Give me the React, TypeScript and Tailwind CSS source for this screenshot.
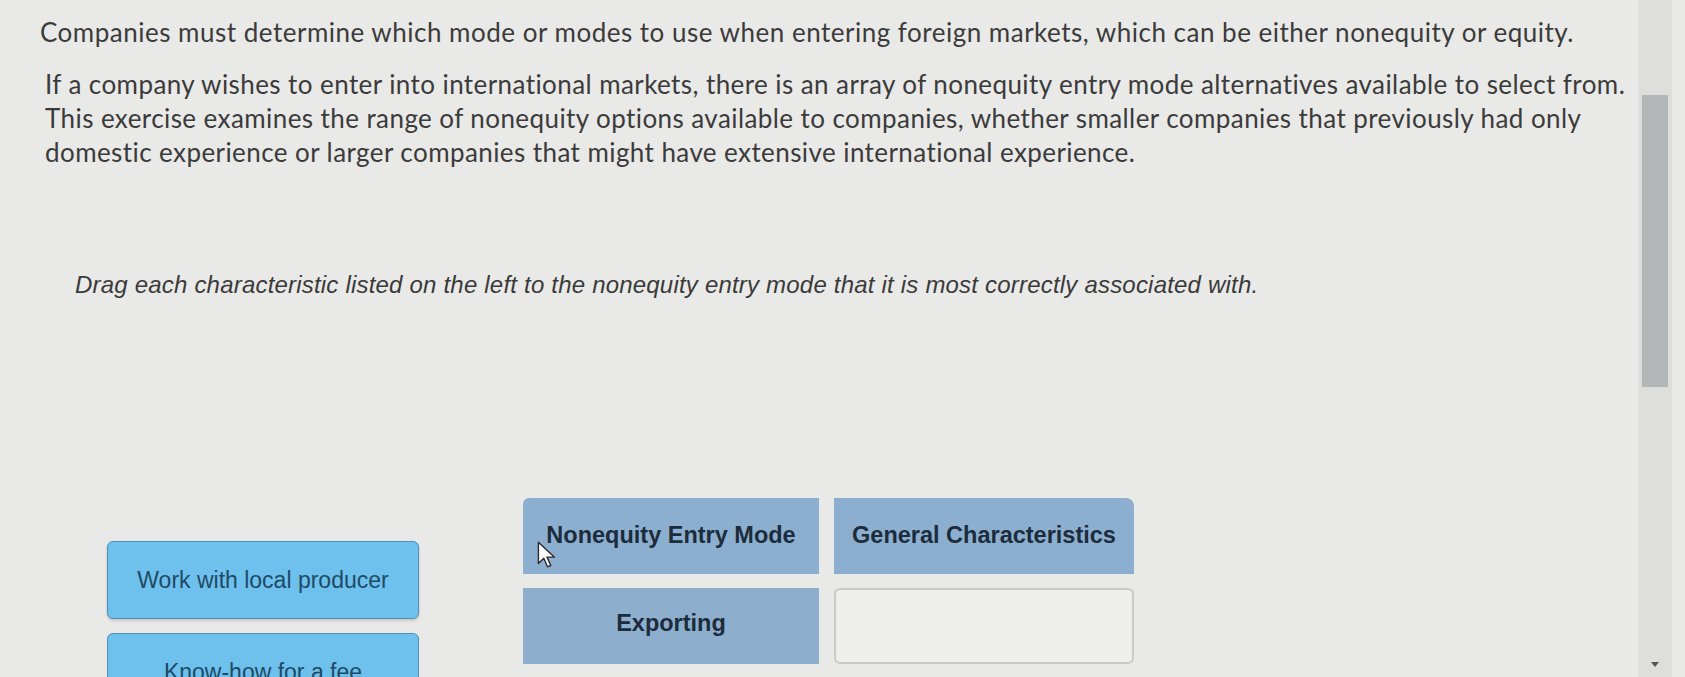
import React from "react";

const bodyFont = { fontFamily: "Lato, 'Open Sans', sans-serif" };

function Cursor() {
  return (
    <svg
      className="absolute left-[13px] top-[42px]"
      width="22"
      height="30"
      viewBox="0 0 20 28"
    >
      <path
        d="M2 2 L2 22 L7 17 L10.5 25 L13.5 23.8 L10 16 L17 16 Z"
        fill="#ffffff"
        stroke="#2a2a2a"
        strokeWidth="1.3"
        strokeLinejoin="round"
      />
    </svg>
  );
}

export default function App() {
  return (
    <div className="flex w-[1685px] h-[677px] overflow-hidden bg-[#e9e9e7] text-[#3b3b3b]">
      <main className="flex-1 pl-[40px] pt-[15px]">
        <p
          className="whitespace-nowrap text-[26px] leading-[34px] tracking-[0.5px]"
          style={bodyFont}
        >
          Companies must determine which mode or modes to use when entering
          foreign markets, which can be either nonequity or equity.
        </p>
        <p
          className="mt-[18px] whitespace-nowrap pl-[5px] text-[26px] leading-[34px] tracking-[0.42px]"
          style={bodyFont}
        >
          If a company wishes to enter into international markets, there is an
          array of nonequity entry mode alternatives available to select from.
          <br />
          This exercise examines the range of nonequity options available to
          companies, whether smaller companies that previously had only
          <br />
          domestic experience or larger companies that might have extensive
          international experience.
        </p>

        <p className="mt-[101px] whitespace-nowrap pl-[35px] text-[24px] leading-[30px] tracking-[0.2px] italic font-['Liberation_Sans',Arial,sans-serif] text-[#3a3a3a]">
          Drag each characteristic listed on the left to the nonequity entry
          mode that it is most correctly associated with.
        </p>

        <div className="mt-[198px] flex items-start font-['Liberation_Sans',Arial,sans-serif]">
          {/* draggable characteristics */}
          <div className="ml-[67px] mt-[43px] flex w-[312px] flex-col gap-[14px]">
            <div className="flex h-[78px] items-center justify-center rounded-[6px] border border-[#4f8fb5] bg-[#6dc1ec] text-[23px] text-[#1f4a66] shadow-[0_2px_3px_rgba(0,0,0,0.15)]">
              Work with local producer
            </div>
            <div className="flex h-[78px] items-center justify-center rounded-[6px] border border-[#4f8fb5] bg-[#6dc1ec] text-[23px] text-[#1f4a66]">
              Know-how for a fee
            </div>
          </div>

          {/* matching table */}
          <div className="ml-[104px] grid grid-cols-[296px_300px] gap-x-[15px] gap-y-[14px] text-[23.5px] font-bold text-[#1c2c3c]">
            <div className="relative flex h-[76px] items-center justify-center rounded-tl-[6px] bg-[#8cafcf]">
              <Cursor />
              Nonequity Entry Mode
            </div>
            <div className="flex h-[76px] items-center justify-center rounded-tr-[8px] bg-[#8cafcf]">
              General Characteristics
            </div>
            <div className="flex h-[76px] items-center justify-center pb-[4px] bg-[#8dafcd]">
              Exporting
            </div>
            <div className="h-[76px] rounded-[6px] border-2 border-[#c9c9c7] bg-[#eeeeec]" />
          </div>
        </div>
      </main>

      {/* scrollbar */}
      <aside className="mr-[13px] flex w-[34px] flex-col bg-[#dededc]">
        <div className="mx-[4px] mt-[95px] h-[292px] bg-[#b4b7b7]" />
        <div className="flex-1" />
        <div className="mb-[10px] flex justify-center">
          <div className="h-0 w-0 border-x-[4px] border-t-[5px] border-x-transparent border-t-[#555]" />
        </div>
      </aside>
    </div>
  );
}
